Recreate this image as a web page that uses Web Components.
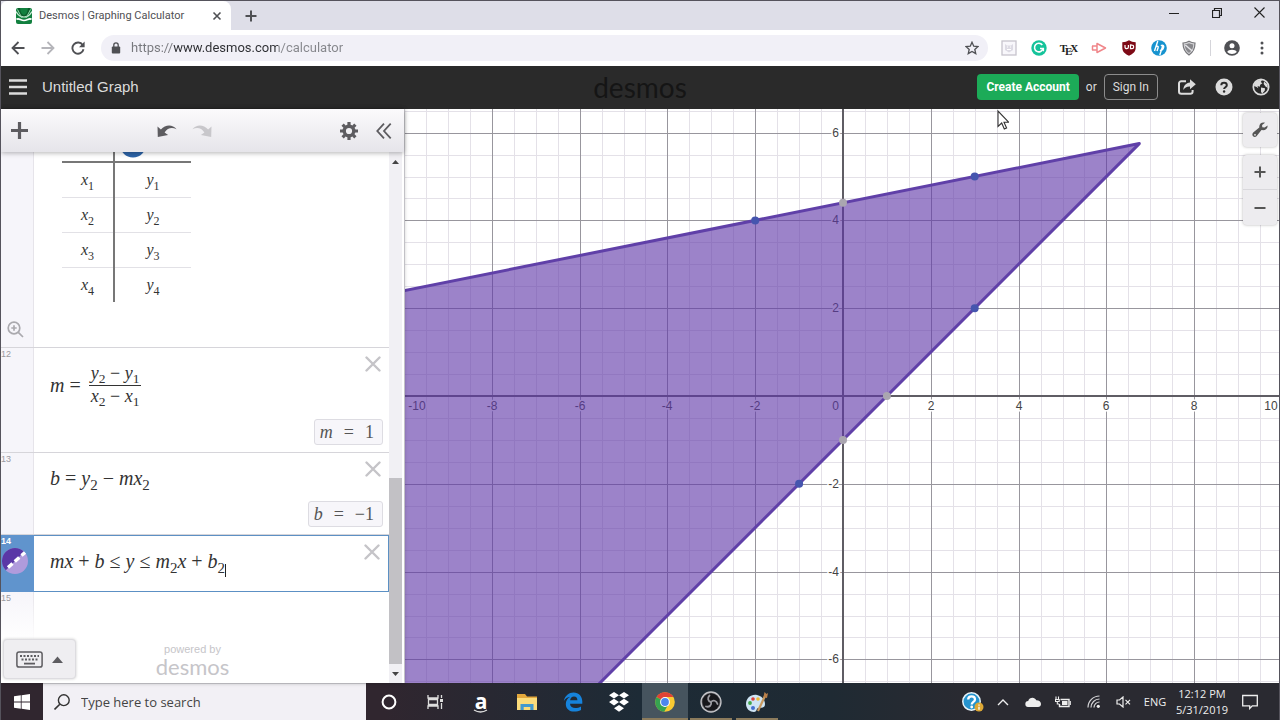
<!DOCTYPE html>
<html lang="en">
<head>
<meta charset="utf-8">
<title>Desmos | Graphing Calculator</title>
<style>
    html, body { height: 100%; margin: 0; }
    body {
        display: flex;
        flex-direction: column;
        box-sizing: border-box;
        border: 1px solid #55535c;
        border-bottom: 0;
        overflow: hidden;
        background: #fff;
        font-family: "Liberation Sans", Arial, sans-serif;
    }
    calc-app { flex: 1; min-height: 0; }
</style>
</head>
<body>
<browser-bar tab="Desmos | Graphing Calculator" url="https://www.desmos.com/calculator"></browser-bar>
<calc-header>Untitled Graph</calc-header>
<calc-app></calc-app>
<task-bar></task-bar>

<script>
// Icon drawings: [width, height, markup]
const ICONS = {
    desmos: [16, 16, '<rect width="16" height="16" rx="2" fill="#12803f"/><path d="M3 0c.5 5 2 8 5 8s4.500-3 5-8" fill="none" stroke="#0b5c2b" stroke-width="2"/><path d="M0 3.500c2 3.500 4 5.500 8 5.500s6-2 8-5.500" fill="none" stroke="#cfeeda" stroke-width="1.200"/><path d="M1.500 1.500L6 10M14.500 1.500L10 10" stroke="#8fd0a6"/><path d="M.5 11.500c2-2 4 1 7.500 1s5.500-3 7.500-1" fill="none" stroke="#fff" stroke-width="1.600"/>'],
    close: [10, 10, '<path d="M1.500 1.500l7 7m0-7l-7 7" stroke="currentColor" stroke-width="1.600"/>'],
    plus: [12, 12, '<path d="M6 .5v11M.5 6h11" stroke="currentColor" stroke-width="2"/>'],
    bigPlus: [17, 17, '<path d="M8.500 0v17M0 8.500h17" stroke="currentColor" stroke-width="3.200"/>'],
    minus: [12, 12, '<path d="M.5 6h11" stroke="currentColor" stroke-width="2"/>'],
    back: [14, 14, '<path d="M13.500 7H2M7.500 1L1.500 7l6 6" fill="none" stroke="currentColor" stroke-width="1.800"/>'],
    forward: [14, 14, '<path d="M.5 7H12M6.500 1l6 6-6 6" fill="none" stroke="currentColor" stroke-width="1.800"/>'],
    reload: [14, 14, '<path d="M11.700 4A5.600 5.600 0 1 0 12.500 8.300" fill="none" stroke="currentColor" stroke-width="1.900"/><path d="M13.600.6v5.600H8z" fill="currentColor"/>'],
    lock: [10, 12, '<rect x=".8" y="4.500" width="8.400" height="7" rx="1" fill="currentColor"/><path d="M2.800 5V3a2.200 2.200 0 0 1 4.400 0v2" fill="none" stroke="currentColor" stroke-width="1.300"/>'],
    star: [14, 14, '<path d="M7 1.200l1.750 3.950 4.250.4-3.200 2.850.95 4.200L7 10.400l-3.750 2.200.95-4.200L1 5.550l4.250-.4z" fill="none" stroke="currentColor" stroke-width="1.300"/>'],
    note: [16, 16, '<rect x="1" y="1" width="14" height="14" fill="#f8f7fb" stroke="#c6c4cc" stroke-width="1.300"/><path d="M4 4l2 1.500h4L12 4v6l-4 2.500L4 10z" fill="#dddbe4"/><path d="M6 7h1m2 0h1M6 9.500h4" stroke="#fff"/>'],
    grammarly: [16, 16, '<circle cx="8" cy="8" r="7.700" fill="#15c39a"/><path d="M11.300 5A4.300 4.300 0 1 0 12 8.500H9" fill="none" stroke="#fff" stroke-width="1.600"/><path d="M9.500 8.500h3v2.800" fill="none" stroke="#fff" stroke-width="1.200"/>'],
    tape: [16, 16, '<path d="M6 3.500L14.500 8 6 12.500z" fill="none" stroke="#f0868a" stroke-width="1.500" stroke-linejoin="round"/><path d="M1 6h5M1 10h5M1.500 6v4" stroke="#f0868a" stroke-width="1.500"/>'],
    ublock: [16, 16, '<path d="M8 .3c2 1.400 4 1.800 6.700 1.900v5.600c0 3.700-2.500 6-6.700 7.900-4.200-1.900-6.700-4.200-6.700-7.900V2.200C4 2.100 6 1.700 8 .3z" fill="#7d0a16"/><path d="M4 5v2a1.700 1.700 0 0 0 3.400 0V5M9.500 5v3.600H11a1.700 1.700 0 0 0 0-3.400z" fill="none" stroke="#fff" stroke-width="1.200"/>'],
    hp: [16, 16, '<circle cx="8" cy="8" r="7.800" fill="#1793cf"/><path d="M6.800 1L3.500 11M4.800 6.700c2-1 2.800-.4 2.300 1L6 11M12 5l-3.200 10M9.800 5.600c2.500-.8 3.400.2 2.800 2-.6 1.900-1.700 3.100-3.700 2.700" fill="none" stroke="#fff" stroke-width="1.400"/>'],
    shield: [16, 16, '<path d="M8 1.200c2 1.200 4 1.700 6 1.800 0 5-1.500 9-6 12-4.500-3-6-7-6-12 2-.1 4-.6 6-1.800z" fill="#d5d5d8" stroke="#77777b" stroke-width="1.200"/><path d="M8 3.200c1.500.7 2.700 1 4.200 1.200 0 3.600-1.200 6.400-4.200 8.600-3-2.200-4.200-5-4.200-8.600C5.300 4.200 6.500 3.900 8 3.200z" fill="#88888c"/><path d="M4.300 5l7 6" stroke="#e5e5e8" stroke-width="1.500"/>'],
    avatar: [16, 16, '<circle cx="8" cy="8" r="7.800" fill="currentColor"/><circle cx="8" cy="5.700" r="2.500" fill="#fff"/><path d="M3.200 12c1-3 8.600-3 9.600 0-2.400 2.600-7.200 2.600-9.600 0z" fill="#fff"/>'],
    dots: [4, 14, '<circle cx="2" cy="2" r="1.500" fill="currentColor"/><circle cx="2" cy="7" r="1.500" fill="currentColor"/><circle cx="2" cy="12" r="1.500" fill="currentColor"/>'],
    winMin: [10, 10, '<path d="M0 5.500h10" stroke="currentColor"/>'],
    winRestore: [10, 10, '<path d="M.5 2.500h7v7h-7zM2.500 2.500v-2h7v7h-2" fill="none" stroke="currentColor" stroke-width="1.200"/>'],
    winClose: [11, 11, '<path d="M.5.5l10 10m0-10l-10 10" stroke="currentColor" stroke-width="1.100"/>'],
    menu: [18, 16, '<path d="M0 1.500h18M0 8h18M0 14.500h18" stroke="currentColor" stroke-width="2.400"/>'],
    share: [18, 16, '<path d="M8 2.200H3.300A2.300 2.300 0 0 0 1 4.500v8a2.300 2.300 0 0 0 2.300 2.300h9a2.300 2.300 0 0 0 2.300-2.300V11" fill="none" stroke="currentColor" stroke-width="2"/><path d="M12 .3l5.800 5-5.800 5V7.400C8.500 7.300 6.800 8.600 5.300 11 5.500 6.600 8 3.700 12 3.400z" fill="currentColor"/>'],
    help: [18, 18, '<circle cx="9" cy="9" r="8.500" fill="currentColor"/><path d="M6.300 7.200c0-3.300 5.500-3.300 5.500 0 0 2-2.700 2-2.700 3.900" fill="none" stroke="#2a2a2a" stroke-width="2"/><circle cx="9.100" cy="13.500" r="1.200" fill="#2a2a2a"/>'],
    globe: [18, 18, '<circle cx="9" cy="9" r="7.700" fill="none" stroke="currentColor" stroke-width="1.700"/><path d="M3 4.500C5 2 7.500 1.500 10 2.200L8.700 4l1.700 1.300-2.200 1.500-.4 2L5.500 8l.8 2.300L4.600 9 2 8zM9 9.500l4 .8-.2 2.300-2.600 3.200-1.200-2zM12 3.500l3 2.500 1 4-2.500-1.500L11.700 6z" fill="currentColor"/>'],
    undo: [20, 14, '<path d="M.8 13L.5 2.600l3.400 3C8.500.3 15.500.3 19.500 5.200 14.800 3 10.500 4 7.600 8.500l3.500 2.600z" fill="currentColor"/>'],
    redo: [20, 14, '<path d="M19.200 13l.3-10.400-3.400 3C11.500.3 4.500.3.5 5.200 5.200 3 9.500 4 12.400 8.500l-3.500 2.600z" fill="currentColor"/>'],
    gear: [18, 18, '<circle cx="9" cy="9" r="4.800" fill="none" stroke="currentColor" stroke-width="3.400"/><path d="M9 0v3M9 15v3M0 9h3M15 9h3M2.600 2.600l2.200 2.200M13.200 13.200l2.200 2.200M15.400 2.600l-2.200 2.200M4.800 13.200l-2.200 2.200" stroke="currentColor" stroke-width="3.200"/>'],
    collapse: [16, 16, '<path d="M8 .7L1.300 8 8 15.300M14.700.7L8 8l6.700 7.300" fill="none" stroke="currentColor" stroke-width="1.800"/>'],
    remove: [16, 16, '<path d="M1.500 1.500l13 13m0-13l-13 13" stroke="currentColor" stroke-width="2.400" stroke-linecap="round"/>'],
    magnify: [17, 17, '<circle cx="7" cy="7" r="5.800" fill="none" stroke="currentColor" stroke-width="1.700"/><path d="M11.300 11.300l4.700 4.700M7 4.300v5.400M4.300 7h5.400" stroke="currentColor" stroke-width="1.700"/>'],
    wrench: [16, 16, '<path d="M15.600 3.600l-3 2-2.300-.4-.2-2.300L13 .7c-3-.9-6.200 1-5.700 4.700L1.200 10.500c-2.400 2.400.8 6 3.300 3.800l5-6.300c3.600.8 6.300-1.400 6.100-4.400z" fill="currentColor"/><circle cx="3" cy="12.800" r=".9" fill="#eee"/>'],
    keyboard: [27, 17, '<rect x=".9" y=".9" width="25.200" height="15.200" rx="2.200" fill="none" stroke="currentColor" stroke-width="1.500"/><path d="M4 5h19M5.500 8.600h16" stroke="currentColor" stroke-width="2" stroke-dasharray="2 1.500"/><path d="M8 12.600h11" stroke="currentColor" stroke-width="1.800"/>'],
    caretUp: [11, 7, '<path d="M0 7L5.500.5 11 7z" fill="currentColor"/>'],
    arrowUp: [7, 4, '<path d="M0 4l3.500-4L7 4z" fill="currentColor"/>'],
    arrowDown: [7, 4, '<path d="M0 0l3.500 4L7 0z" fill="currentColor"/>'],
    headDot: [26, 6, '<circle cx="13" cy="-7.500" r="13" fill="#2d64a8"/>'],
    shade: [28, 28, '<circle cx="14" cy="14" r="13" fill="#b09bdc"/><path d="M4.800 23.200A13 13 0 0 1 23.200 4.800z" fill="#5a37a6"/><path d="M7 20.500L24 5.500" stroke="#fff" stroke-width="3.400" stroke-dasharray="6 3"/>'],
    pointer: [12, 20, '<path d="M1 1v15.500l3.700-3.500 2.600 6 2.300-1-2.600-5.800h4.600z" fill="#fff" stroke="#333" stroke-width="1.100"/>'],
    windows: [16, 16, '<path d="M0 2.300l6.800-1v6.300H0zM7.600 1.200L16 0v7.600H7.600zM0 8.400h6.800v6.300L0 13.700zM7.600 8.400H16V16l-8.400-1.200z" fill="#fff"/>'],
    search: [16, 16, '<circle cx="9.800" cy="6.200" r="5.400" fill="none" stroke="currentColor" stroke-width="1.400"/><path d="M5.800 10.200L.5 15.500" stroke="currentColor" stroke-width="1.600"/>'],
    cortana: [16, 16, '<circle cx="8" cy="8" r="6.400" fill="none" stroke="#fff" stroke-width="2"/>'],
    taskview: [17, 14, '<path d="M1 0v3h10V0M1 14v-3h10v3M1.500 4.500h9v5h-9zM14.500 0v3M14.500 8v6" fill="none" stroke="#ddd" stroke-width="1.300"/><path d="M13 4h3v3h-3z" fill="#ddd"/>'],
    explorer: [22, 20, '<path d="M1 2h8l2 2.500h10V18H1z" fill="#e3a83c"/><path d="M1 6h20v12H1z" fill="#fbdc7b"/><path d="M4.500 18v-6h13v6h-3.200v-3H7.700v3z" fill="#4299ce"/>'],
    edge: [20, 20, '<path d="M.8 9C2 3.500 6 .5 10.500.5c5.300 0 8.800 3.900 8.800 9v2.300H7c.2 3 2.400 4.200 5.300 4.200 2 0 4-.6 5.700-1.600V18c-2 1.100-4.300 1.600-6.700 1.600-5 0-8.500-3-8.500-7.700 0-3.200 1.700-5.800 4.400-7.200C4.500 5 2.500 6.400.8 9zm6.300-.8h7.300c0-2-1-3.600-3.400-3.600-2.200 0-3.600 1.600-3.900 3.600z" fill="#1683dc"/>'],
    dropbox: [22, 20, '<path d="M6 0l5 3.300-5 3.300-5-3.300zM16 0l5 3.300-5 3.300-5-3.300zM6 6.800l5 3.300-5 3.300-5-3.300zM16 6.800l5 3.300-5 3.300-5-3.300zM11 13l5 3.300-5 3.400-5-3.400z" fill="#fff"/>'],
    chrome: [20, 20, '<circle cx="10" cy="10" r="9.800" fill="#f9ca32"/><path d="M10 10L1.500 5.100A9.800 9.800 0 0 1 18.500 5.100H10z" fill="#e14235"/><path d="M1.500 5.100a9.800 9.800 0 0 0 7.700 14.700L13.500 12 10 10z" fill="#36a350"/><circle cx="10" cy="10" r="4.900" fill="#fff"/><circle cx="10" cy="10" r="3.900" fill="#4c86ed"/>'],
    obs: [22, 22, '<circle cx="11" cy="11" r="10" fill="#6b6b70" stroke="#c4c4c8" stroke-width="1.300"/><circle cx="11" cy="11" r="8.700" fill="#17171b"/><g fill="none" stroke="#9a9aa0" stroke-width="1.800" stroke-linecap="round"><path d="M11 11C8 10.500 7 7 9.500 4.500"/><path d="M11 11c2-2.500 5.500-1.500 6.500 2"/><path d="M11 11c1 3-1.500 5.500-5 4.500"/></g>'],
    paint: [24, 22, '<path d="M12 4C6 3 1 7 1 13c0 5 4 8 8 8 3 0 2-3 4-4 3-1 7 1 7-4 0-4-3-8-8-9z" fill="#cfe5f4"/><circle cx="5" cy="12" r="1.900" fill="#41a54b"/><circle cx="8" cy="8" r="1.800" fill="#d9413a"/><circle cx="13" cy="8" r="1.800" fill="#ecbb35"/><circle cx="8" cy="17" r="2" fill="#4470cf"/><path d="M13 20L20 5" stroke="#c99a60" stroke-width="2.200"/><path d="M18.500 6l1-5 2 2 1.500-1-1 5z" fill="#b9804a"/>'],
    support: [22, 20, '<circle cx="9.500" cy="9.500" r="8.700" fill="#2594cf" stroke="#e8f4fa" stroke-width="1.500"/><path d="M6.200 7.500c0-4.200 6.800-4.200 6.800 0 0 2.400-3.300 2.500-3.300 5" fill="none" stroke="#fff" stroke-width="2.300"/><circle cx="9.700" cy="15" r="1.400" fill="#fff"/><circle cx="17" cy="15" r="4.500" fill="#dda835"/><path d="M17 12.500v1.300M17 14.800v3" stroke="#fff" stroke-width="1.300"/>'],
    chevron: [12, 8, '<path d="M1 7l5-5 5 5" fill="none" stroke="#eee" stroke-width="1.400"/>'],
    cloud: [16, 10, '<path d="M3.500 10a3 3 0 0 1-.3-6C4.300 0 9.800-.3 11.300 3.300 14.200 3.300 16 5 16 7c0 2-1.300 3-3 3z" fill="#eee"/>'],
    battery: [16, 12, '<path d="M5.500 3.500h8.500v7H4.500V8" fill="none" stroke="#eee" stroke-width="1.400"/><path d="M7 5h5.500v4H7z" fill="#eee"/><path d="M15.300 5v4M1 .5v2.500M3.500.5v2.500M.5 3.500h3.700v2H.5zM2.300 5v3h2" stroke="#eee" fill="none" stroke-width="1.100"/>'],
    wifi: [13, 13, '<g fill="none" stroke="#d5d5d8" stroke-width="1.200"><path d="M1 12.500A11.500 11.500 0 0 1 12.500 1"/><path d="M4 12.500A8.500 8.500 0 0 1 12.500 4"/><path d="M7 12.500A5.500 5.500 0 0 1 12.500 7"/></g><circle cx="11.300" cy="11.300" r="1.600" fill="#eee"/>'],
    mute: [15, 12, '<path d="M1 4h2.500l3.500-3v10L3.500 8H1z" fill="none" stroke="#eee" stroke-width="1.200"/><path d="M9.500 3.800l4.500 4.500m0-4.500l-4.500 4.500" stroke="#eee" stroke-width="1.200"/>'],
    notice: [16, 16, '<path d="M.7 1.500h14.600v10.300h-5L7.700 14.500v-2.700h-7z" fill="none" stroke="#eee" stroke-width="1.300"/>']
};

const icon = name => `<ui-icon name="${name}"></ui-icon>`;

class UiIcon extends HTMLElement {
    connectedCallback() {
        const [w, h, body] = ICONS[this.getAttribute('name')];
        const root = this.attachShadow({ mode: 'open' });
        root.innerHTML = `
            <style>
                :host { display: inline-flex; flex: none; }
                svg { display: block; }
            </style>
            <svg width="${w}" height="${h}" viewBox="0 0 ${w} ${h}" aria-hidden="true">${body}</svg>
        `;
    }
}
customElements.define('ui-icon', UiIcon);

// Tab strip and address bar
class BrowserBar extends HTMLElement {
    connectedCallback() {
        const extensions = ['note', 'grammarly', 'tex', 'tape', 'ublock', 'hp', 'shield'];
        this.attachShadow({ mode: 'open' }).innerHTML = `
            <style>
                :host { display: block; font-family: Roboto, "Open Sans", sans-serif; color: #4f5054; }
                button { border: 0; padding: 0; background: none; color: inherit; font: inherit; display: flex; align-items: center; justify-content: center; }
                .tabs { display: flex; height: 29px; background: #dedee8; align-items: stretch; }
                .tab { display: flex; align-items: center; width: 206px; padding: 0 9px 0 15px; gap: 7px; background: #fff; border-radius: 6px 8px 0 0; font-size: 11px; }
                .tab span { flex: 1; white-space: nowrap; }
                .new { width: 40px; }
                .window { display: flex; margin-left: auto; color: #222; }
                .window button { width: 43px; padding: 0 0 6px 4px; }
                .bar { display: flex; align-items: center; height: 36px; padding: 0 2px; background: #fff; }
                .nav { width: 30px; height: 30px; }
                .nav[disabled] { color: #b5b5ba; }
                .address { flex: 1; display: flex; align-items: center; gap: 10px; height: 26px; margin: 0 6px 0 8px; padding: 0 9px 0 10px; border-radius: 13px; background: #f1f0f7; }
                /* The host part of the address is darker than the rest */
                input {
                    flex: 1; min-width: 0; border: 0; padding: 0; outline: 0; height: 20px;
                    font: 13px/20px Roboto, "Open Sans", sans-serif; color: #4a4b50;
                    background: linear-gradient(90deg, #77787d 42px, #2c2d31 42px 147px, #85868b 147px);
                    -webkit-background-clip: text; background-clip: text; -webkit-text-fill-color: transparent;
                }
                .ext { width: 30px; height: 30px; }
                .tex { font: bold 11px "Liberation Serif", serif; color: #222; }
                .tex sub { font-size: 11px; line-height: 0; vertical-align: -3px; margin: 0 -2px; }
                hr { width: 1px; height: 16px; border: 0; margin: 0 6px 0 6px; background: #d5d5da; }
            </style>
            <div class="tabs">
                <div class="tab">${icon('desmos')}<span>${this.getAttribute('tab')}</span><button aria-label="Close tab">${icon('close')}</button></div>
                <button class="new" aria-label="New tab">${icon('plus')}</button>
                <div class="window">
                    <button aria-label="Minimize">${icon('winMin')}</button>
                    <button aria-label="Restore">${icon('winRestore')}</button>
                    <button aria-label="Close">${icon('winClose')}</button>
                </div>
            </div>
            <div class="bar">
                <button class="nav" aria-label="Back">${icon('back')}</button>
                <button class="nav" aria-label="Forward" disabled>${icon('forward')}</button>
                <button class="nav" aria-label="Reload">${icon('reload')}</button>
                <div class="address">
                    ${icon('lock')}
                    <input type="text" aria-label="Address" value="${this.getAttribute('url')}">
                    <button aria-label="Bookmark">${icon('star')}</button>
                </div>
                ${extensions.map(name => `<button class="ext" aria-label="${name}">${
                    name === 'tex' ? '<span class="tex">T<sub>E</sub>X</span>' : icon(name)}</button>`).join('')}
                <hr>
                <button class="ext" aria-label="Profile">${icon('avatar')}</button>
                <button class="ext" aria-label="More">${icon('dots')}</button>
            </div>
        `;
    }
}
customElements.define('browser-bar', BrowserBar);

class CalcHeader extends HTMLElement {
    constructor() {
        super();
        this.attachShadow({ mode: 'open' }).innerHTML = `
            <style>
                :host { display: grid; grid-template-columns: 1fr auto 1fr; align-items: center; height: 41px; padding-bottom: 2px; background: #2a2a2a; color: #dcdcdc; font-size: 15px; }
                button { border: 0; padding: 0; background: none; color: inherit; font: inherit; display: flex; align-items: center; justify-content: center; }
                .left { display: flex; align-items: center; gap: 15px; padding-left: 8px; }
                .logo { font: 28px/30px Lato, sans-serif; color: #151515; }
                .right { display: flex; align-items: center; justify-content: flex-end; font: 12px Roboto, sans-serif; }
                .create, .sign { height: 26px; border-radius: 4px; }
                .create { background: #1cab58; color: #fff; padding: 0 9px; font-weight: bold; }
                .sign { border: 1px solid #8c8c8c; padding: 0 8px; }
                .or { padding: 0 7px; }
                .tool { width: 37px; height: 30px; }
                .sign + .tool { margin-left: 10px; }
            </style>
            <div class="left"><button aria-label="Menu">${icon('menu')}</button><slot></slot></div>
            <div class="logo">desmos</div>
            <div class="right">
                <button class="create">Create Account</button>
                <span class="or">or</span>
                <button class="sign">Sign In</button>
                <button class="tool" aria-label="Share">${icon('share')}</button>
                <button class="tool" aria-label="Help">${icon('help')}</button>
                <button class="tool" aria-label="Language">${icon('globe')}</button>
            </div>
        `;
    }
}
customElements.define('calc-header', CalcHeader);

// Turns "y_2 − mx" into italic letters and lowered digits
const formatMath = text => text
    .replace(/[a-z]+/g, '<i>$&</i>')
    .replace(/_(\d)/g, '<sub>$1</sub>');

class MathText extends HTMLElement {
    connectedCallback() {
        const [expr, top, bottom] = ['expr', 'top', 'bottom'].map(name => this.getAttribute(name));
        this.attachShadow({ mode: 'open' }).innerHTML = `
            <style>
                :host { display: inline-flex; align-items: center; gap: 8px; font-family: "Liberation Serif", "Times New Roman", serif; white-space: nowrap; }
                sub { font-size: 75%; line-height: 0; vertical-align: -5px; }
                .frac { display: grid; text-align: center; line-height: 20px; font-size: 18px; }
                .frac span { height: 21px; padding: 0 2px; }
                .frac span:first-child { height: 22px; border-bottom: 1px solid #333; }
                .frac sub { vertical-align: -4px; }
            </style>
            <span>${formatMath(expr)}</span>
            ${top ? `<span class="frac"><span>${formatMath(top)}</span><span>${formatMath(bottom)}</span></span>` : ''}
        `;
    }
}
customElements.define('math-text', MathText);

// One line of the expression list
class ExprRow extends HTMLElement {
    connectedCallback() {
        const result = this.getAttribute('result');
        const mark = this.getAttribute('icon');
        const active = this.hasAttribute('active');
        this.attachShadow({ mode: 'open' }).innerHTML = `
            <style>
                :host { display: grid; grid-template-columns: 33px 1fr; font-size: 20px; color: #333; border-bottom: 1px solid #d6d5da; }
                :host([active]) { border-bottom: 0; }
                :host([blank]) { flex: 1; border-bottom: 0; }
                .gutter { display: flex; flex-direction: column; box-sizing: border-box; border-right: 1px solid #e6e4ea; background: #f6f5fa; font-size: 9px; line-height: 12px; color: #9b9aa0; }
                .gutter ui-icon { color: #aaa9ae; }
                :host([active]) .gutter { background: #6094cd; color: #fff; font-weight: bold; border-color: #6094cd; }
                :host([table]) .gutter { justify-content: flex-end; padding: 0 0 9px 6px; }
                :host([blank]) .gutter { background: linear-gradient(#f6f5fa, #fff 50px); border-image: linear-gradient(#e6e4ea, #fff 50px) 1; border-width: 0 1px 0 0; }
                .body { display: grid; grid-template-columns: 1fr auto; align-content: start; row-gap: 12px; padding: 0 6px 7px 16px; }
                :host([active]) .body { border: 1px solid #5c90c4; border-left: 0; padding: 0 6px 19px 16px; }
                :host([table]) .body { display: block; padding: 0 6px 45px 28px; }
                .expr { padding-top: 15px; line-height: 21px; display: flex; align-items: center; }
                button { align-self: start; border: 0; margin-top: 8px; padding: 0; width: 20px; height: 16px; background: none; color: #c5c4c8; display: flex; justify-content: center; }
                output { grid-column: 1 / -1; justify-self: end; box-sizing: border-box; height: 26px; padding: 0 8px 0 5px; border: 1px solid #dddce2; border-radius: 3px; background: #f7f6fa; font: 18px/24px "Liberation Serif", serif; color: #555; display: flex; gap: 11px; }
                .caret { width: 1px; height: 13px; align-self: flex-end; background: #222; margin-bottom: -5px; }
            </style>
            <div class="gutter"><span>${this.getAttribute('number') || ''}</span>${mark ? icon(mark) : ''}</div>
            <div class="body">
                ${this.hasAttribute('table') || this.hasAttribute('blank') ? '<slot></slot>' : `
                    <div class="expr"><slot></slot>${active ? '<span class="caret"></span>' : ''}</div>
                    <button aria-label="Delete">${icon('remove')}</button>
                `}
                ${result ? `<output>${result.split(' ').map(part => `<span>${formatMath(part)}</span>`).join('')}</output>` : ''}
            </div>
        `;
    }
}
customElements.define('expr-row', ExprRow);

class ValueTable extends HTMLElement {
    constructor() {
        super();
        const rows = [1, 2, 3, 4].map(n => `
            <tr><td><math-text expr="x_${n}"></math-text></td><td><math-text expr="y_${n}"></math-text></td></tr>`);
        this.attachShadow({ mode: 'open' }).innerHTML = `
            <style>
                :host { display: block; font-size: 16px; }
                table { border-collapse: collapse; width: 129px; table-layout: fixed; }
                th, td { padding: 0; text-align: center; vertical-align: middle; border-bottom: 1px solid #e2e1e6; }
                tr > :first-child { width: 51px; border-right: 2px solid #777; }
                th { height: 9px; border-bottom: 2px solid #777; line-height: 0; vertical-align: top; }
                th + th { text-align: left; padding-left: 5px; }
                td { height: 34px; line-height: 18px; }
                tr:last-child td { border-bottom: 0; }
            </style>
            <table>
                <tr><th></th><th>${icon('headDot')}</th></tr>
                ${rows.join('')}
            </table>
        `;
    }
}
customElements.define('value-table', ValueTable);

class ExprPanel extends HTMLElement {
    constructor() {
        super();
        this.attachShadow({ mode: 'open' }).innerHTML = `
            <style>
                :host { display: flex; flex-direction: column; position: relative; background: #fff; box-shadow: 0 0 4px rgba(0, 0, 0, .3); }
                button { border: 0; padding: 0; background: none; color: #5d5c60; display: flex; align-items: center; justify-content: center; }
                .tools { display: flex; align-items: center; height: 43px; padding: 0 12px 0 10px; background: linear-gradient(#fbfafc, #e6e5ea); box-shadow: 0 1px 5px rgba(0, 0, 0, .3); position: relative; z-index: 1; }
                .history { display: flex; gap: 15px; margin: 0 auto; }
                .history button[disabled] { color: #c8c7cb; }
                .tools > button + button { margin-left: 18px; }
                .scroll { flex: 1; min-height: 0; display: flex; }
                .list { flex: 1; min-width: 0; display: flex; flex-direction: column; overflow: hidden; }
                .bar { display: flex; flex-direction: column; width: 13px; margin-right: 2px; background: #f1f0f4; color: #444; }
                .bar ui-icon { height: 19px; align-items: center; justify-content: center; }
                .track { flex: 307; }
                .thumb { flex: 186; background: #c2c1c5; }
                .powered { position: absolute; left: 0; right: 20px; bottom: 4px; text-align: center; color: #c6c5c9; font-size: 11px; line-height: 12px; }
                .powered b { display: block; font: 22px/24px Lato, sans-serif; }
                .keypad { position: absolute; left: 2px; bottom: 4px; width: 73px; height: 40px; gap: 9px; border: 1px solid #dddce0; border-radius: 4px; background: #efeef1; box-shadow: 0 0 3px rgba(0, 0, 0, .2); }
            </style>
            <div class="tools">
                <button aria-label="Add item">${icon('bigPlus')}</button>
                <div class="history">
                    <button aria-label="Undo">${icon('undo')}</button>
                    <button aria-label="Redo" disabled>${icon('redo')}</button>
                </div>
                <button aria-label="Edit list">${icon('gear')}</button>
                <button aria-label="Hide list">${icon('collapse')}</button>
            </div>
            <div class="scroll">
                <div class="list">
                    <expr-row table icon="magnify"><value-table></value-table></expr-row>
                    <expr-row number="12" result="m = 1"><math-text expr="m =" top="y_2 − y_1" bottom="x_2 − x_1"></math-text></expr-row>
                    <expr-row number="13" result="b = −1"><math-text expr="b = y_2 − mx_2"></math-text></expr-row>
                    <expr-row number="14" icon="shade" active><math-text expr="mx + b ≤ y ≤ m_2x + b_2"></math-text></expr-row>
                    <expr-row number="15" blank></expr-row>
                </div>
                <div class="bar">${icon('arrowUp')}<div class="track"></div><div class="thumb"></div>${icon('arrowDown')}</div>
            </div>
            <div class="powered">powered by<b>desmos</b></div>
            <button class="keypad" aria-label="Show keypad">${icon('keyboard')}${icon('caretUp')}</button>
        `;
    }
}
customElements.define('expr-panel', ExprPanel);

// Plots b + mx <= y <= b2 + m2x on a grid centred on the origin
class GraphPaper extends HTMLElement {
    constructor() {
        super();
        this.unit = 43.9;
        this.attachShadow({ mode: 'open' }).innerHTML = `
            <style>
                :host { display: block; position: relative; overflow: hidden; background: #fff; }
                svg.plot { display: block; width: 100%; height: 100%; }
                text { font: 12px "Liberation Sans", Arial, sans-serif; fill: #444; stroke: #fff; stroke-width: 3px; paint-order: stroke; }
                .tools { position: absolute; top: 4px; right: 2px; display: grid; gap: 8px; }
                .group { display: grid; border-radius: 4px; background: #edecef; box-shadow: 0 0 3px rgba(0, 0, 0, .3); }
                button { width: 34px; height: 34px; border: 0; padding: 0; background: none; color: #555; display: flex; align-items: center; justify-content: center; }
                button + button { border-top: 1px solid #d9d8dc; height: 36px; }
                .pointer { position: absolute; right: 270px; top: 1px; }
            </style>
            <svg class="plot" viewBox="-438 -287 874 574" preserveAspectRatio="xMidYMid slice" role="img" aria-label="Graph">${this.draw()}</svg>
            <div class="tools">
                <div class="group"><button aria-label="Graph settings">${icon('wrench')}</button></div>
                <div class="group"><button aria-label="Zoom in">${icon('plus')}</button><button aria-label="Zoom out">${icon('minus')}</button></div>
            </div>
            <span class="pointer">${icon('pointer')}</span>
        `;
    }

    draw() {
        const px = v => Math.round(v * this.unit);
        const line = (v, color, width) => {
            const shift = width % 2 / 2;
            return `<path d="M${px(v) + shift} -900V900M-1600 ${px(v) + shift}H1600" stroke="${color}" stroke-width="${width}"/>`;
        };
        let minor = '', major = '', labels = '';
        for (let v = -12; v <= 12; v += 0.5) {
            if (v % 2) minor += line(v, '#e4e1e8', 1);
            else if (v) major += line(v, '#98969d', 1);
        }
        for (let v = -10; v <= 10; v += 2) {
            if (!v) continue;
            // The outermost labels are kept inside the paper
            const x = Math.abs(v) === 10 ? (v < 0 ? -426 : 428) : px(v);
            labels += `<text x="${x}" y="14" text-anchor="middle">${v}</text>`;
            if (Math.abs(v) <= 6) labels += `<text x="-4" y="${px(-v) + 4}" text-anchor="end">${v}</text>`;
        }
        labels += '<text x="-4" y="14" text-anchor="end">0</text>';
        const at = (x, y) => `${x * this.unit} ${-y * this.unit}`;
        const edge = `M${at(-12, 2)}L${at(6.75, 5.75)}L${at(-12, -13)}`;
        const dot = (x, y, color) => `<circle cx="${x * this.unit}" cy="${-y * this.unit}" r="4" fill="${color}"/>`;
        return `
            ${minor}${major}${line(0, '#5f5d64', 2)}${labels}
            <path d="${edge}z" fill="#6037a8" fill-opacity=".62"/>
            <path d="${edge}" fill="none" stroke="#6040a8" stroke-width="3" stroke-linejoin="round"/>
            ${[[-2, 4], [3, 5], [3, 2], [-1, -2]].map(([x, y]) => dot(x, y, '#4555ae')).join('')}
            ${[[0, 4.4], [1, 0], [0, -1]].map(([x, y]) => dot(x, y, '#aaa6b0')).join('')}
        `;
    }
}
customElements.define('graph-paper', GraphPaper);

class CalcApp extends HTMLElement {
    constructor() {
        super();
        this.attachShadow({ mode: 'open' }).innerHTML = `
            <style>
                :host { display: grid; grid-template: minmax(0, 1fr) / 403px minmax(0, 1fr); column-gap: 1px; background: #dddce2; }
                expr-panel { z-index: 1; }
            </style>
            <expr-panel></expr-panel>
            <graph-paper></graph-paper>
        `;
    }
}
customElements.define('calc-app', CalcApp);

class TaskBar extends HTMLElement {
    constructor() {
        super();
        const apps = ['cortana', 'taskview', 'amazon', 'explorer', 'edge', 'dropbox', 'chrome', 'obs', 'paint'];
        const tray = ['support', 'chevron', 'cloud', 'battery', 'wifi', 'mute'];
        this.attachShadow({ mode: 'open' }).innerHTML = `
            <style>
                :host { display: flex; align-items: stretch; height: 37px; background: linear-gradient(90deg, #30262f 30%, #1d2b36 50%, #1f2a33 65%, #2a2a31 76%); color: #eee; font-family: "Open Sans", "Noto Sans", sans-serif; font-size: 11px; }
                button { border: 0; padding: 0; background: none; color: inherit; font: inherit; display: flex; align-items: center; justify-content: center; box-sizing: border-box; }
                .start { width: 42px; }
                label { display: flex; align-items: center; gap: 11px; flex: 0 1 312px; padding-left: 11px; background: #f2f0f5; border-top: 1px solid #d0ced4; color: #333; }
                input { flex: 1; min-width: 0; border: 0; padding: 0; outline: 0; background: none; font: 13px/20px "Open Sans", "Noto Sans", sans-serif; }
                input::placeholder { color: #444; opacity: 1; }
                .app { width: 46px; padding-top: 2px; border-bottom: 2px solid transparent; }
                .chrome { background: #46545e; }
                .chrome, .obs, .paint { border-color: #8b7b5c; }
                .obs, .paint { border-image: linear-gradient(90deg, transparent 4px, #8b7b5c 4px 42px, transparent 42px) 2; border-width: 0 0 2px; }
                .amazon { font: bold 21px/20px "Open Sans", sans-serif; flex-direction: column; color: #fff; }
                .amazon svg { margin-top: -2px; }
                .tray { display: flex; margin-left: auto; }
                .tray button { width: 30px; }
                .tray .lang { width: 34px; }
                .tray .clock { width: 60px; flex-direction: column; line-height: 16px; }
                .tray .notice { width: 36px; margin-right: 11px; }
            </style>
            <button class="start" aria-label="Start">${icon('windows')}</button>
            <label>${icon('search')}<input type="text" placeholder="Type here to search" aria-label="Type here to search"></label>
            ${apps.map(name => `<button class="app ${name}" aria-label="${name}">${name === 'amazon'
                ? 'a<svg width="16" height="4"><path d="M1 1c4 2.500 9 2.500 13 0" fill="none" stroke="#ddd" stroke-width="1.300"/></svg>'
                : icon(name)}</button>`).join('')}
            <div class="tray">
                ${tray.map(name => `<button aria-label="${name}">${icon(name)}</button>`).join('')}
                <button class="lang">ENG</button>
                <button class="clock"><span>12:12 PM</span><span>5/31/2019</span></button>
                <button class="notice" aria-label="Notifications">${icon('notice')}</button>
            </div>
        `;
    }
}
customElements.define('task-bar', TaskBar);
</script>
</body>
</html>
